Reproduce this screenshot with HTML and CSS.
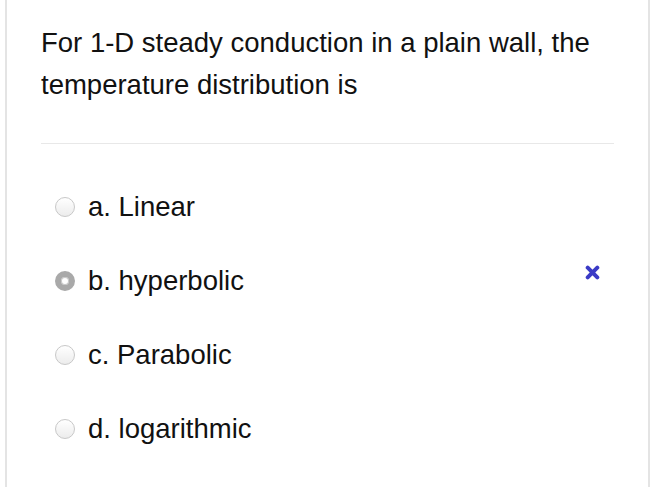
FILE: index.html
```html
<!DOCTYPE html>
<html lang="en">

<head>
    <meta charset="UTF-8">
    <title>Quiz</title>
    <link rel="stylesheet" href="styles.css">
</head>

<body>
    <section class="kort">
        <div class="spoergsmaal">
            <p>For 1-D steady conduction in a plain wall, the temperature distribution is</p>
        </div>
        <div class="svar">
            <label class="valg">
                <span class="radio"></span>
                <span class="tekst">a. Linear</span>
            </label>
            <label class="valg">
                <span class="radio valgt"></span>
                <span class="tekst">b. hyperbolic</span>
                <svg class="forkert" viewBox="0 0 15 15" width="15" height="15">
                    <path d="M2.7 2.7 L12.3 12.3 M12.3 2.7 L2.7 12.3" stroke="#3b3bc6" stroke-width="4" stroke-linecap="round" />
                </svg>
            </label>
            <label class="valg">
                <span class="radio"></span>
                <span class="tekst">c. Parabolic</span>
            </label>
            <label class="valg">
                <span class="radio"></span>
                <span class="tekst">d. logarithmic</span>
            </label>
        </div>
    </section>
</body></html>
```

FILE: styles.css
```css
body {
    margin: 0;
    background-color: white;
    font-family: "Liberation Sans", Arial, sans-serif;
    color: #111;
}

.kort {
    margin: 0 5px;
    height: 487px;
    border-left: 2px solid #e4e4e4;
    border-right: 2px solid #e4e4e4;
    box-sizing: border-box;
}

.spoergsmaal {
    margin: 0 34px 0 34px;
    padding-top: 22px;
    padding-bottom: 37px;
    border-bottom: 1px solid #e8e8e8;
}

.spoergsmaal p {
    margin: 0;
    font-size: 27.5px;
    line-height: 42px;
}

.svar {
    padding: 46px 0 0 48px;
    display: flex;
    flex-direction: column;
    gap: 40px;
}

.valg {
    display: flex;
    align-items: center;
    height: 34px;
    position: relative;
}

.radio {
    width: 20px;
    height: 20px;
    border: 1px solid #c8c8c8;
    border-radius: 50%;
    background: linear-gradient(#ffffff, #ececec);
    margin-right: 13px;
    box-sizing: border-box;
}

.radio.valgt {
    border: 6px solid #a9a9a9;
    background: white;
    box-shadow: inset 0 0 0 1px #c9c9c9;
}

.tekst {
    font-size: 27.5px;
}

.forkert {
    position: absolute;
    left: 530px;
    top: 1px;
}
```
